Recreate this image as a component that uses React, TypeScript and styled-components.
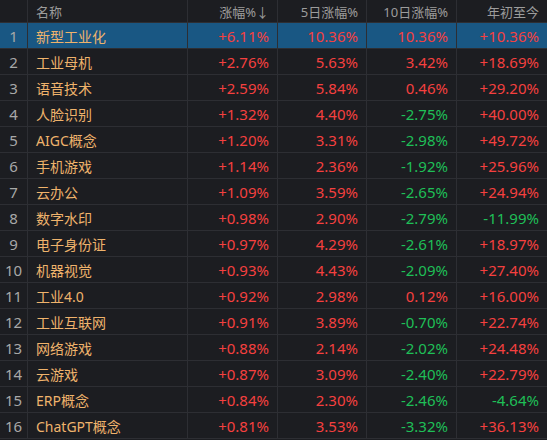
import React from "react";
import styled, { createGlobalStyle } from "styled-components";

const Global = createGlobalStyle`
  html, body { margin: 0; padding: 0; background: #1c1d21; }
  body { font-family: "Noto Sans", "Noto Sans CJK SC", sans-serif; }
`;

const LINE = "#2d2e33";
const BG = "#1c1d21";
const HL = "#195783";
const RED = "#f5403f";
const GREEN = "#1fbf57";

const Table = styled.div`
  width: 547px;
  height: 440px;
  background: ${BG};
  overflow: hidden;
`;

const Row = styled.div<{ $h: number }>`
  display: grid;
  grid-template-columns: 27px 159px 89px 88px 89px 1fr;
  column-gap: 1px;
  background: ${LINE};
  height: ${(p) => p.$h}px;
  border-bottom: 1px solid ${LINE};
`;

const Cell = styled.div<{ $align?: "left" | "right" | "center"; $active?: boolean; $color?: string; $size?: number }>`
  background: ${(p) => (p.$active ? HL : BG)};
  display: flex;
  align-items: center;
  justify-content: ${(p) => (p.$align === "left" ? "flex-start" : p.$align === "center" ? "center" : "flex-end")};
  padding: ${(p) => (p.$align === "left" ? "0 0 0 8px" : p.$align === "center" ? "0" : "0 8px 0 0")};
  color: ${(p) => p.$color || "#a5a5a5"};
  font-size: ${(p) => p.$size || 14}px;
  white-space: nowrap;
`;

const HeaderCell = styled(Cell)`
  font-size: 13px;
  color: #9c9c9c;
`;

type R = [string, number, number, number, number];
const data: R[] = [
  ["新型工业化", 6.11, 10.36, 10.36, 10.36],
  ["工业母机", 2.76, 5.63, 3.42, 18.69],
  ["语音技术", 2.59, 5.84, 0.46, 29.2],
  ["人脸识别", 1.32, 4.4, -2.75, 40.0],
  ["AIGC概念", 1.2, 3.31, -2.98, 49.72],
  ["手机游戏", 1.14, 2.36, -1.92, 25.96],
  ["云办公", 1.09, 3.59, -2.65, 24.94],
  ["数字水印", 0.98, 2.9, -2.79, -11.99],
  ["电子身份证", 0.97, 4.29, -2.61, 18.97],
  ["机器视觉", 0.93, 4.43, -2.09, 27.4],
  ["工业4.0", 0.92, 2.98, 0.12, 16.0],
  ["工业互联网", 0.91, 3.89, -0.7, 22.74],
  ["网络游戏", 0.88, 2.14, -2.02, 24.48],
  ["云游戏", 0.87, 3.09, -2.4, 22.79],
  ["ERP概念", 0.84, 2.3, -2.46, -4.64],
  ["ChatGPT概念", 0.81, 3.53, -3.32, 36.13],
];

const fmt = (v: number, sign: boolean) => {
  const s = Math.abs(v).toFixed(2) + "%";
  if (v < 0) return "-" + s;
  return (sign ? "+" : "") + s;
};
const col = (v: number) => (v < 0 ? GREEN : RED);

export default function App() {
  return (
    <>
      <Global />
      <Table>
        <Row $h={22}>
          <HeaderCell $align="center" />
          <HeaderCell $align="left">名称</HeaderCell>
          <HeaderCell>涨幅%↓</HeaderCell>
          <HeaderCell>5日涨幅%</HeaderCell>
          <HeaderCell>10日涨幅%</HeaderCell>
          <HeaderCell>年初至今</HeaderCell>
        </Row>
        {data.map((r, i) => {
          const a = i === 0;
          return (
            <Row $h={25} key={i}>
              <Cell $align="center" $active={a} $color="#a8a8a8" $size={15}>
                {i + 1}
              </Cell>
              <Cell $align="left" $active={a} $color="#efb36c">
                {r[0]}
              </Cell>
              <Cell $active={a} $color={col(r[1])} $size={15}>{fmt(r[1], true)}</Cell>
              <Cell $active={a} $color={col(r[2])} $size={15}>{fmt(r[2], false)}</Cell>
              <Cell $active={a} $color={col(r[3])} $size={15}>{fmt(r[3], false)}</Cell>
              <Cell $active={a} $color={col(r[4])} $size={15}>{fmt(r[4], true)}</Cell>
            </Row>
          );
        })}
      </Table>
    </>
  );
}
